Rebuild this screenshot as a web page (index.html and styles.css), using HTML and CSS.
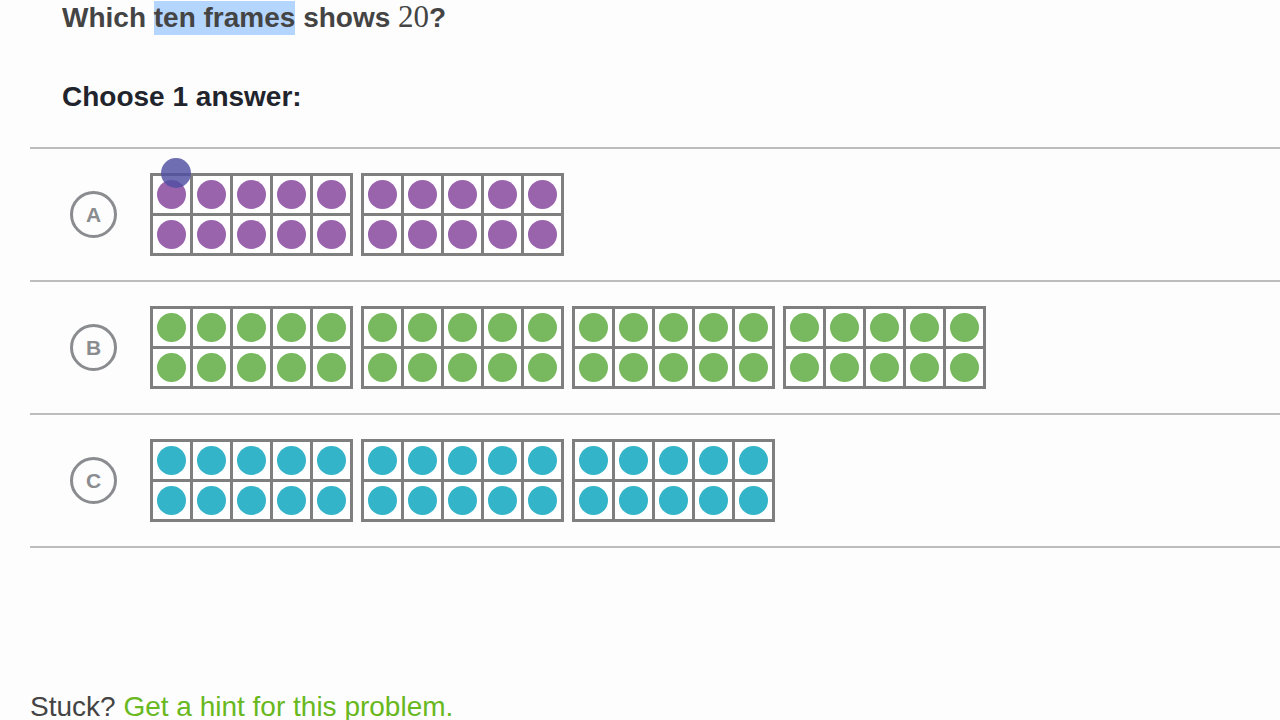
FILE: index.html
```html
<!DOCTYPE html>
<html>
<head>
<meta charset="utf-8">
<link rel="stylesheet" href="styles.css">
</head>
<body>
<div class="page">
  <h1 class="question">Which <span class="sel">ten frames</span> shows <span class="math">20</span>?</h1>
  <h2 class="choose">Choose 1 answer:</h2>
  <ul class="choices">
    <li class="choice">
      <span class="letter">A</span>
      <div class="frames purple">
        <div class="frame first"><i></i><i></i><i></i><i></i><i></i><i></i><i></i><i></i><i></i><i></i><span class="cursor"></span></div>
        <div class="frame"><i></i><i></i><i></i><i></i><i></i><i></i><i></i><i></i><i></i><i></i></div>
      </div>
    </li>
    <li class="choice">
      <span class="letter">B</span>
      <div class="frames green">
        <div class="frame"><i></i><i></i><i></i><i></i><i></i><i></i><i></i><i></i><i></i><i></i></div>
        <div class="frame"><i></i><i></i><i></i><i></i><i></i><i></i><i></i><i></i><i></i><i></i></div>
        <div class="frame"><i></i><i></i><i></i><i></i><i></i><i></i><i></i><i></i><i></i><i></i></div>
        <div class="frame"><i></i><i></i><i></i><i></i><i></i><i></i><i></i><i></i><i></i><i></i></div>
      </div>
    </li>
    <li class="choice">
      <span class="letter">C</span>
      <div class="frames teal">
        <div class="frame"><i></i><i></i><i></i><i></i><i></i><i></i><i></i><i></i><i></i><i></i></div>
        <div class="frame"><i></i><i></i><i></i><i></i><i></i><i></i><i></i><i></i><i></i><i></i></div>
        <div class="frame"><i></i><i></i><i></i><i></i><i></i><i></i><i></i><i></i><i></i><i></i></div>
      </div>
    </li>
  </ul>
  <p class="stuck">Stuck? <a class="hint" href="#">Get a hint for this problem.</a></p>
</div>
</body>
</html>
```
FILE: styles.css
```css
* { box-sizing: border-box; }
html, body {
  margin: 0;
  padding: 0;
  background: #fdfdfd;
}
body {
  font-family: "Liberation Sans", Arial, sans-serif;
  width: 1280px;
  height: 720px;
  overflow: hidden;
}
.page {
  padding-left: 30px;
}
.question {
  margin: 0;
  padding-left: 32px;
  font-size: 28px;
  line-height: 34px;
  font-weight: bold;
  color: #444444;
}
.sel {
  background: #b4d5fd;
  padding: 1px 0 2px;
}
.math {
  font-family: "Liberation Serif", "Times New Roman", serif;
  font-weight: normal;
  font-size: 31px;
}
.choose {
  margin: 45px 0 0;
  padding-left: 32px;
  font-size: 28px;
  line-height: 34px;
  font-weight: bold;
  color: #21242c;
}
.choices {
  list-style: none;
  margin: 33px 0 0;
  padding: 0;
  border-top: 2px solid #bdbdbd;
}
.choice {
  position: relative;
  display: flex;
  align-items: center;
  height: 133px;
  padding-left: 40px;
  border-bottom: 2px solid #bdbdbd;
}
.letter {
  width: 47px;
  height: 47px;
  border: 3px solid #8a8c90;
  border-radius: 50%;
  display: flex;
  align-items: center;
  justify-content: center;
  font-size: 21px;
  font-weight: bold;
  color: #8a8c90;
  margin-right: 33px;
}
.frames {
  display: flex;
  gap: 8px;
}
.frame {
  position: relative;
  display: grid;
  grid-template-columns: repeat(5, 37px);
  grid-template-rows: repeat(2, 37px);
  gap: 3px;
  padding: 3px;
  background: #7f7f7f;
}
.frame i {
  display: block;
  background: #ffffff;
  position: relative;
}
.frame i::after {
  content: "";
  position: absolute;
  left: 4px;
  top: 4px;
  width: 29px;
  height: 29px;
  border-radius: 50%;
}
.purple .frame i::after { background: #9a64ad; }
.green .frame i::after { background: #78b85e; }
.teal .frame i::after { background: #33b4c8; }
.cursor {
  position: absolute;
  left: 11px;
  top: -15px;
  width: 30px;
  height: 30px;
  border-radius: 50%;
  background: rgba(80, 78, 162, 0.82);
}
.stuck {
  margin: 144px 0 0;
  font-size: 28px;
  line-height: 30px;
  color: #444444;
}
.hint {
  color: #68b81e;
  text-decoration: none;
}
```
